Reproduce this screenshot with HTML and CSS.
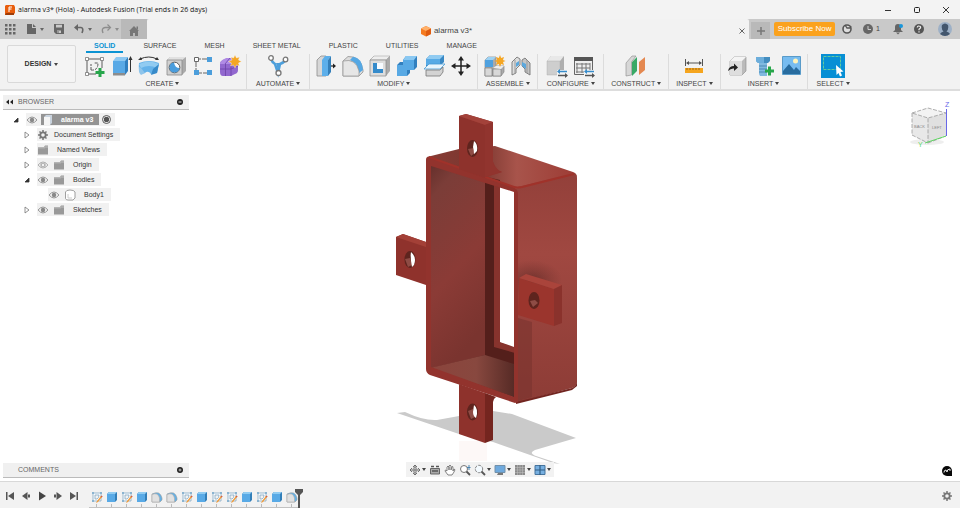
FILE: index.html
```
<!DOCTYPE html>
<html lang="en">
<head>
<meta charset="utf-8">
<meta name="viewport" content="width=device-width, initial-scale=1">
<title>alarma v3* (Hola) - Autodesk Fusion</title>
<link rel="stylesheet" href="styles.css">
</head>
<body>
<svg class="sprite" aria-hidden="true">
  <defs>
    <symbol id="sketch" viewBox="0 0 24 24"><g fill="none" stroke="#5b5b5b"><path d="M4 5H19V14M4 5V20H13"/><path d="M8 16V10M8 16Q15 17 15 9L11 9" stroke-dasharray="3 1"/></g><g fill="#fff" stroke="#666" stroke-width=".7"><path d="M2.500 3.500h3v3h-3zM17.500 3.500h3v3h-3zM2.500 18.500h3v3h-3z"/></g><path d="M17 14v9M12.500 18.500h9" stroke="#27a64b" stroke-width="3"/></symbol>
    <symbol id="extrude" viewBox="0 0 24 24"><path d="M3 7 6 3H18L15 7Z" fill="#8cc8f2"/><path d="M3 7H15V21H3Z" fill="#58a9e6"/><path d="M15 7 18 3V17L15 21Z" fill="#2f7fc0"/><path d="M3 19H15V21.500H3Z" fill="#8c8c8c"/><path d="M20.500 18V5" stroke="#333"/><path d="m18.500 6 2-4 2 4z" fill="#333"/></symbol>
    <symbol id="revolve" viewBox="0 0 24 24"><path d="M2 9Q12 5 22 9L20 19 14 20Q11 16 8 19L4 20Q1 16 2 9Z" fill="#65b2e9"/><path d="M2 10Q12 5 22 10L20 14Q12 10 4 14Z" fill="#91cbf1"/><path d="M16 15 22 10 20 19 14 21Z" fill="#378ac9"/><path d="M4 14 8 19 4 21Q1 18 2 13Z" fill="#8fc5eb"/><path d="M3 5Q12 1 20 5" fill="none" stroke="#333"/><path d="M1 6 4 3 5 6zM22 6 18 6 20 3z" fill="#333"/></symbol>
    <symbol id="hole" viewBox="0 0 24 24"><path d="M3 6 6 3H22V17L18 21H3Z" fill="#aaa"/><path d="M3 6 6 3H22L18 6Z" fill="#e1e1e1"/><path d="M3 6H18V21H3Z" fill="#d0d0d0" stroke="#8a8a8a" stroke-width=".8"/><circle cx="10.500" cy="13.500" r="5.300" fill="#fff" stroke="#555"/><path d="M10 8.500A5 5 0 1 0 15.500 14Q11 14 10 8.500" fill="#4a9ddd"/></symbol>
    <symbol id="pattern" viewBox="0 0 24 24"><path d="M5 5H19M5 8V19H19" fill="none" stroke="#666" stroke-dasharray="5 1"/><path d="M3.500 3.500h4v4h-4z" fill="#fff" stroke="#666"/><path d="M16 3h5v5h-5zM3 16h5v5h-5zM16 16h5v5h-5z" fill="#4c9edb"/></symbol>
    <symbol id="form" viewBox="0 0 24 24"><path d="M2 10Q2 7 5 6L9 4H18Q20 5 20 8V16Q20 19 17 20L13 22H5Q2 22 2 18Z" fill="#9268cf"/><path d="M2 9Q4 5 9 4H18Q20 6 18 8L13 10H2Z" fill="#b08be5"/><path d="M2 15H13L20 12M7.500 10V22M13 10V22M7 10 12 4" fill="none" stroke="#6c42a8" stroke-width=".8"/><path d="m17 1 1.500 3L21.500 3l-1 3 3 1.500-3 1.500 1 3-3-1-1.500 3-1.500-3-3 1 1-3-3-1.500L14 6l-1-3 2.500 1z" fill="#f5a623" stroke="#f7f7f7" stroke-width=".4"/></symbol>
    <symbol id="automate" viewBox="0 0 24 24"><path d="M5 5Q6 8 9 10L12 19L14 10Q17 9 20 6" fill="none" stroke="#4d9fdb" stroke-width="2.500"/><path d="M10 9h4l-1 8h-1z" fill="#4d9fdb"/><g fill="#fff" stroke="#777" stroke-width="1.300"><circle cx="5" cy="4" r="2.300"/><circle cx="19.500" cy="5.500" r="2.300"/><circle cx="12.500" cy="19" r="2.500"/></g></symbol>
    <symbol id="presspull" viewBox="0 0 24 24"><path d="M3 6 7 2H12V22H3Z" fill="#d7d7d7" stroke="#8d8d8d" stroke-width=".8"/><path d="M8 6 11 2H17L14 6V22H8Z" fill="#5dafea"/><path d="m14 6 3-4v16l-3 4z" fill="#347fb9"/><path d="M17 12h4" stroke="#222" stroke-width="1.200"/><path d="m19 9.500 3 2.500-3 2.500z" fill="#222"/></symbol>
    <symbol id="fillet" viewBox="0 0 24 24"><path d="M2 22V7L7 2.500Q20 2 22 16V18L18 22Z" fill="#dcdcdc" stroke="#929292" stroke-width=".8"/><path d="M12 2.800Q21 4 22 16L18 19Q17 9 9 6Z" fill="#55a8e4"/><path d="M2 7Q15 4 18 17V22H2Z" fill="#e6e6e6" stroke="#999" stroke-width=".8"/></symbol>
    <symbol id="shell" viewBox="0 0 24 24"><path d="M2 6 6 2H22V17L18 22H2Z" fill="#aaa"/><path d="M2 6 6 2H22L18 6Z" fill="#eee" stroke="#999" stroke-width=".5"/><path d="M2 6H18V22H2Z" fill="#ddd" stroke="#888" stroke-width=".7"/><path d="M5 9H15V19H5Z" fill="#fff"/><path d="M5 9H9V15H15V19H5Z" fill="#358bcb"/><path d="M9 9H15V15H9Z" fill="#f7fbff"/></symbol>
    <symbol id="combine" viewBox="0 0 24 24"><path d="M8 6 11 2H22V13L19 16H15V19L12 22H2V11L5 8H8Z" fill="#327fbe"/><path d="M8 6 11 2H22L19 6Z" fill="#8ac8f2"/><path d="M8 6H19V16H12V22H2V11H8Z" fill="#58a9e4"/></symbol>
    <symbol id="split" viewBox="0 0 24 24"><path d="M4 5 8 1H22V8L18 12H4Z" fill="#3988c4"/><path d="M4 5 8 1H22L18 5Z" fill="#91cbf1"/><path d="M4 5H18V11H4Z" fill="#58aae5"/><path d="M2 15 7 10H23L18 15Z" fill="#eaf5fc" stroke="#489bd4" stroke-width=".8"/><path d="M4 16H18L21 13V18L18 22H4Z" fill="#d3d3d3" stroke="#777" stroke-width=".8"/></symbol>
    <symbol id="move" viewBox="0 0 24 24"><path d="M12 4V20M4 12H20" stroke="#222" stroke-width="1.500"/><path d="m12 2 3 4.500h-6zM12 22 9 17.500h6zM2 12l4.500-3v6zM22 12l-4.500-3v6z" fill="#222"/></symbol>
    <symbol id="assemble" viewBox="0 0 24 24"><path d="M3 6 6 3H14V12H22V18L19 22H3Z" fill="#aaa" stroke="#888" stroke-width=".7"/><path d="M3 6 6 3H14L11 6Z" fill="#9dd2f4"/><path d="M3 6H11V13H3Z" fill="#4fa1df"/><path d="M3 14H10V22H3zM11 15H19V22H11z" fill="#d8d8d8" stroke="#777" stroke-width=".6"/><path d="m11 14 3-2h8l-3 3z" fill="#eee"/><path d="m18 1 1.200 3L22 3l-1 3 2.500 1L21 8l1 3-2.800-1L18 13l-1.200-3L14 11l1-3-2.500-1L15 6l-1-3 2.800 1z" fill="#f5a623"/></symbol>
    <symbol id="joint" viewBox="0 0 24 24"><path d="M3 8 8 3 11 5V11L7 15V19L3 21Z" fill="#ddd" stroke="#777" stroke-width=".9"/><path d="M21 9 16 4 13 6V12L16 15V18L21 21Z" fill="#c4c4c4" stroke="#777" stroke-width=".9"/><path d="M7 9 10 7V11L7 13zM13 8l4 2v5l-4-3z" fill="#5ba8dd"/><path d="M18 6V19M6 6V20" stroke="#999"/></symbol>
    <symbol id="configure" viewBox="0 0 24 24"><path d="M2 7 6 2H19V17L15 21H2Z" fill="#aeaeae"/><path d="M2 7 6 2H19L15 7Z" fill="#e8e8e8"/><path d="M2 7H15V21H2Z" fill="#cecece" stroke="#aaa" stroke-width=".4"/><use href="#swap"/></symbol>
    <symbol id="swap" viewBox="0 0 24 24"><path d="M12 16H23V23H12z" fill="#f4f4f4"/><path d="M13 17.500H22" stroke="#388dcb" stroke-width="1.500"/><path d="M13 21.500H22" stroke="#555" stroke-width="1.500"/><path d="m12 17.500 3-2.500v5z" fill="#388dcb"/><path d="m23 21.500-3-2.500v5z" fill="#555"/></symbol>
    <symbol id="table" viewBox="0 0 24 24"><path d="M2.500 3.500H20.500V20.500H2.500Z" fill="#eee" stroke="#666"/><path d="M2 3H21V7H2Z" fill="#555"/><path d="M4 10H18M4 14H18M4 18H14M5 9V19M10 9V19M14 9V19M18 9V19" fill="none" stroke="#777"/><use href="#swap"/></symbol>
    <symbol id="construct" viewBox="0 0 24 24"><path d="M8 8 13 3V17L8 22Z" fill="#38a966"/><path d="M2 9 8 2H12L7.500 8V21L2 22Z" fill="#d7d7d7" stroke="#888" stroke-width=".6"/><path d="M15 8 21 3V16L15 21Z" fill="#e48850"/></symbol>
    <symbol id="measure" viewBox="0 0 24 24"><path d="M3 14H21V19H3Z" fill="#f5a51e"/><path d="M5 14v2M8 14v2M11 14v2M14 14v2M17 14v2" stroke="#9d681a"/><path d="M3.500 5V12M20.500 5V12M5 9H19" stroke="#555"/><path d="m4 9 3-2v4zM20 9l-3-2v4z" fill="#555"/></symbol>
    <symbol id="insert" viewBox="0 0 24 24"><path d="M5 7 9 3H21V17L17 21H5Z" fill="#bbb" stroke="#888" stroke-width=".6"/><path d="M5 7H17V21H5Z" fill="#dedede"/><path d="m5 7 4-4h12l-4 4z" fill="#f4f4f4"/><path d="M3 17Q4 12 9 12V9.500L13 13.500 9 17V14.500Q6 14 3 17Z" fill="#222"/></symbol>
    <symbol id="bolt" viewBox="0 0 24 24"><path d="M4 3H18V7L16 9H6L4 7Z" fill="#438dbf"/><path d="M4 3H12V9H6L4 7Z" fill="#6daedb"/><path d="M7 9H15V22H8L7 20Z" fill="#80b9df"/><path d="M7 12H15M7 15H15M7 18H15" stroke="#4a89b5"/><path d="M17.500 12.500v9M13 17h9" stroke="#27a64b" stroke-width="3"/></symbol>
    <symbol id="image" viewBox="0 0 24 24"><path d="M3.500 2.500H21.500V20.500H3.500Z" fill="#77bcf0" stroke="#599bc9"/><circle cx="16.500" cy="7" r="2.500" fill="#fff3ba"/><path d="M4 17 10 10 15 16 17 13 21 17V20H4Z" fill="#286c9f"/></symbol>
    <symbol id="select" viewBox="0 0 24 24"><path d="M0 0H24V24H0Z" fill="#078fd5"/><path d="M2.500 2.500H19.500V15.500H2.500Z" fill="none" stroke="#62cb9c" stroke-dasharray="3 1"/><path d="m15 11 .500 10 2-2 1.500 3.500 2-1-1.500-3.500 3-.500z" fill="#fff"/></symbol>
    <symbol id="eye" viewBox="0 0 12 12"><path d="M1 6Q6 0 11 6Q6 12 1 6Z" fill="#eee" stroke="#999"/><circle cx="6" cy="6" r="2.200" fill="#888"/></symbol>
    <symbol id="eyeoff" viewBox="0 0 12 12"><path d="M1 6Q6 0 11 6Q6 12 1 6ZM4 3.500V8.500M8 3.500V8.500" fill="none" stroke="#b0b0b0"/><circle cx="6" cy="6" r="1.800" fill="none" stroke="#b0b0b0"/></symbol>
    <symbol id="folder" viewBox="0 0 12 12"><path d="M1 3H7L8 1.500H11V10.500H1Z" fill="#999"/><path d="M1 3.800H7.500L8.500 3H11" fill="none" stroke="#ddd" stroke-width=".6"/></symbol>
    <symbol id="gear" viewBox="0 0 12 12"><circle cx="6" cy="6" r="2.700" fill="none" stroke="#777" stroke-width="1.800"/><path d="M6 1v2M6 9v2M1 6h2M9 6h2M2.500 2.500l1.300 1.300M8.200 8.200l1.300 1.300M9.500 2.500 8.200 3.800M3.800 8.200 2.500 9.500" stroke="#777" stroke-width="1.500"/></symbol>
    <symbol id="closed" viewBox="0 0 8 8"><path d="M2 1 6 4 2 7Z" fill="#fff" stroke="#777" stroke-width=".8"/></symbol>
    <symbol id="open" viewBox="0 0 8 8"><path d="M6 2V6H2Z" fill="#333" stroke="#333" stroke-width=".8"/></symbol>
    <symbol id="t-sketch" viewBox="0 0 12 12"><path d="M2 2H10V10H2ZM4 4V8H6Q8 7 8 4Z" fill="#f8fbfd" stroke="#7aa0bd" stroke-width=".7"/><path d="M1 1h2v2H1zM9 1h2v2H9zM1 9h2v2H1z" fill="#8ab4d1"/><path d="m6 10 4-5 1 1-4 5-2 1z" fill="#f29b38"/><path d="m9.500 5.500 1-1 1.200 1-1 1z" fill="#d35f45"/></symbol>
    <symbol id="t-extrude" viewBox="0 0 12 12"><path d="M1 3 3 1H11V9L9 11H1Z" fill="#327fb9"/><path d="M1 3 3 1H11L9 3Z" fill="#91ccf2"/><path d="M1 3H9V11H1Z" fill="#59aae6"/></symbol>
    <symbol id="t-fillet" viewBox="0 0 12 12"><path d="M1 11V3Q9-1 11 7V9L9 11Z" fill="#64b1e6" stroke="#9a9a9a" stroke-width=".6"/><path d="M1 3.500Q7 1 8.500 7V11H1Z" fill="#e1e1e1" stroke="#aaa" stroke-width=".6"/></symbol>
  </defs>
</svg>
<div class="app">
  <header class="titlebar">
    <svg class="ico12" viewBox="0 0 12 12" aria-hidden="true"><path d="M2 1H10L11 3V9L9 11H1V2Z" fill="#e85d0c"/><path d="M2 9H10V11H1z" fill="#9e3c08"/><path d="M5 8V3H8M5 5H7.500" fill="none" stroke="#fff"/></svg>
    <h1>alarma v3* (Hola) - Autodesk Fusion (Trial ends in 26 days)</h1>
    <div class="window-controls">
      <button aria-label="Minimize"><svg class="ico8" viewBox="0 0 8 8"><path d="M1 4.500H7" stroke="#333"/></svg></button>
      <button aria-label="Maximize"><svg class="ico8" viewBox="0 0 8 8"><rect x="1.500" y="1.500" width="5" height="5" rx="1" fill="none" stroke="#222"/></svg></button>
      <button aria-label="Close window"><svg class="ico8" viewBox="0 0 8 8"><path d="m1 1 6 6M7 1 1 7" stroke="#222" stroke-width=".9"/></svg></button>
    </div>
  </header>

  <nav class="docbar" aria-label="Documents">
    <div class="quick">
      <button aria-label="Data panel"><svg class="ico12" viewBox="0 0 12 12"><path d="M1 1h2.500v2.500H1zM5 1h2.500v2.500H5zM9 1h2.500v2.500H9zM1 5h2.500v2.500H1zM5 5h2.500v2.500H5zM9 5h2.500v2.500H9zM1 9h2.500v2.500H1zM5 9h2.500v2.500H5zM9 9h2.500v2.500H9z" fill="#666"/></svg></button>
      <button aria-label="File"><svg class="ico12" viewBox="0 0 12 12"><path d="M2 1H7V5H11V11H2Z" fill="#666"/><path d="m8 1 3 3H8z" fill="#666"/></svg><i class="caret"></i></button>
      <button aria-label="Save"><svg class="ico12" viewBox="0 0 12 12"><path d="M1 1H11V11H3L1 9Z" fill="#666"/><path d="M3 1.800H9V4.500H3ZM4 7.500H8V10H4Z" fill="#c9c9c9"/><path d="M5 8V10" stroke="#666"/></svg></button>
      <button aria-label="Undo"><svg class="ico12" viewBox="0 0 12 12"><path d="M3 4.500H8Q11 5 9 10" fill="none" stroke="#666" stroke-width="1.600"/><path d="M1 4.500 5 1V8Z" fill="#666"/></svg><i class="caret"></i></button>
      <button aria-label="Redo" class="dim"><svg class="ico12" viewBox="0 0 12 12"><path d="M10 4.500H5Q1 5 3 10" fill="none" stroke="#666" stroke-width="1.400"/><path d="M7.500 1.500 10.500 4.500 7.500 7.500" fill="none" stroke="#666" stroke-width="1.200"/></svg><i class="caret"></i></button>
    </div>
    <button class="home" aria-label="Home"><svg class="ico12" viewBox="0 0 12 12"><path d="M6 1 11 6H10V11H7V8H5V11H2V6H1Z" fill="#777"/><path d="M8.500 1.500H10V5L8.500 3.500Z" fill="#777"/></svg></button>
    <div class="doc-tab">
      <span class="doc-name"><svg class="ico12" viewBox="0 0 12 12" aria-hidden="true"><path d="m6 1 5 2.500V9L6 11.500 1 9V3.500Z" fill="#f57b20"/><path d="m6 1 5 2.500L6 6 1 3.500Z" fill="#ffb06a"/><path d="M6 6 11 3.500V9L6 11.500Z" fill="#df5b10"/></svg>alarma v3*</span>
      <button aria-label="Close document"><svg class="ico8" viewBox="0 0 8 8"><path d="m1.500 1.500 5 5M6.500 1.500 1.500 6.500" stroke="#666"/></svg></button>
    </div>
    <button class="new-tab" aria-label="New document"><svg class="ico12" viewBox="0 0 12 12"><path d="M6 2V10M2 6H10" stroke="#777" stroke-width="1.500"/></svg></button>
    <button class="subscribe">Subscribe Now</button>
    <div class="account">
      <button aria-label="Extensions"><svg class="ico12" viewBox="0 0 12 12"><circle cx="6" cy="6" r="4" fill="#ddd" stroke="#555" stroke-width="1.600"/><path d="m4 2 2 3h3l1-2" fill="none" stroke="#555" stroke-width="1.300"/></svg></button>
      <button aria-label="Job status"><svg class="ico12" viewBox="0 0 12 12"><circle cx="6" cy="6" r="5" fill="#666"/><path d="M6 3V6.500H9" fill="none" stroke="#ccc"/></svg><span>1</span></button>
      <button aria-label="Notifications"><svg class="ico12" viewBox="0 0 12 12"><path d="M1 9 3 7V4Q3 1 6 1T9 4V7L11 9ZM4 9.500H8L6 11.500Z" fill="#666"/><circle cx="9" cy="3" r="2" fill="#1897dc"/></svg></button>
      <button aria-label="Help"><svg class="ico12" viewBox="0 0 12 12"><circle cx="6" cy="6" r="5" fill="#555"/><path d="M4.200 4.500Q4.500 2.800 6 3Q8 3.200 7.500 5L6 6.300V7.300M6 8.300V9.500" fill="none" stroke="#eee" stroke-width="1.200"/></svg></button>
      <button aria-label="Profile"><svg class="ico14" viewBox="0 0 14 14"><circle cx="7" cy="7" r="7" fill="#9db0c6"/><path d="M2 12Q3 10 5.500 9.500Q3 7 4 3Q7 0 10 3Q11 7 8.500 9.500Q11 10 12 12Q7 16 2 12" fill="#43566d"/></svg></button>
    </div>
  </nav>

  <section class="ribbon" aria-label="Ribbon">
    <button class="workspace">DESIGN<i class="caret"></i></button>
    <div class="ribbon-main">
      <div class="tabs">
        <button class="tab active">SOLID</button><button class="tab">SURFACE</button><button class="tab">MESH</button><button class="tab">SHEET METAL</button><button class="tab">PLASTIC</button><button class="tab">UTILITIES</button><button class="tab">MANAGE</button>
      </div>
      <div class="groups">
        <div class="group first"><div class="tools"><button aria-label="Create sketch"><svg><use href="#sketch"/></svg></button><button aria-label="Extrude"><svg><use href="#extrude"/></svg></button><button aria-label="Revolve"><svg><use href="#revolve"/></svg></button><button aria-label="Hole"><svg><use href="#hole"/></svg></button><button aria-label="Pattern"><svg><use href="#pattern"/></svg></button><button aria-label="Create form"><svg><use href="#form"/></svg></button></div><button class="menu">CREATE<i class="caret"></i></button></div>
        <div class="group wide"><div class="tools"><button aria-label="Automated modeling"><svg><use href="#automate"/></svg></button></div><button class="menu">AUTOMATE<i class="caret"></i></button></div>
        <div class="group"><div class="tools"><button aria-label="Press pull"><svg><use href="#presspull"/></svg></button><button aria-label="Fillet"><svg><use href="#fillet"/></svg></button><button aria-label="Shell"><svg><use href="#shell"/></svg></button><button aria-label="Combine"><svg><use href="#combine"/></svg></button><button aria-label="Split body"><svg><use href="#split"/></svg></button><button aria-label="Move"><svg><use href="#move"/></svg></button></div><button class="menu">MODIFY<i class="caret"></i></button></div>
        <div class="group"><div class="tools"><button aria-label="New component"><svg><use href="#assemble"/></svg></button><button aria-label="Joint"><svg><use href="#joint"/></svg></button></div><button class="menu">ASSEMBLE<i class="caret"></i></button></div>
        <div class="group mid"><div class="tools"><button aria-label="Configure model"><svg><use href="#configure"/></svg></button><button aria-label="Configuration table"><svg><use href="#table"/></svg></button></div><button class="menu">CONFIGURE<i class="caret"></i></button></div>
        <div class="group mid"><div class="tools"><button aria-label="Offset plane"><svg><use href="#construct"/></svg></button></div><button class="menu">CONSTRUCT<i class="caret"></i></button></div>
        <div class="group mid"><div class="tools"><button aria-label="Measure"><svg><use href="#measure"/></svg></button></div><button class="menu">INSPECT<i class="caret"></i></button></div>
        <div class="group"><div class="tools"><button aria-label="Insert derive"><svg><use href="#insert"/></svg></button><button aria-label="Insert fastener"><svg><use href="#bolt"/></svg></button><button aria-label="Insert image"><svg><use href="#image"/></svg></button></div><button class="menu">INSERT<i class="caret"></i></button></div>
        <div class="group wide last"><div class="tools"><button aria-label="Select tool"><svg><use href="#select"/></svg></button></div><button class="menu">SELECT<i class="caret"></i></button></div>
      </div>
    </div>
  </section>

  <main class="canvas">
    <svg class="scene" viewBox="0 91 960 390" role="img" aria-label="Red enclosure model">
      <defs>
        <linearGradient id="wall" x1="0" y1="0" x2=".3" y2="1"><stop offset="0" stop-color="#66302c"/><stop offset=".15" stop-color="#7b3d38"/><stop offset=".6" stop-color="#8b3b36"/><stop offset="1" stop-color="#7a342f"/></linearGradient>
        <linearGradient id="side" x1="0" y1="0" x2="0" y2="1"><stop offset="0" stop-color="#93403a"/><stop offset=".35" stop-color="#a04841"/><stop offset="1" stop-color="#8d3c36"/></linearGradient>
        <linearGradient id="top" x1="0" y1="0" x2="1" y2="0"><stop offset="0" stop-color="#883c35"/><stop offset=".35" stop-color="#79362f"/><stop offset=".6" stop-color="#a8544b"/><stop offset="1" stop-color="#9d3c35"/></linearGradient>
        <linearGradient id="floor" x1="0" y1="0" x2="1" y2="0"><stop offset="0" stop-color="#8b443c"/><stop offset=".55" stop-color="#88483f"/><stop offset="1" stop-color="#572b26"/></linearGradient>
        <radialGradient id="shade"><stop offset="0" stop-color="#431e1b" stop-opacity=".5"/><stop offset="1" stop-color="#5e2825" stop-opacity="0"/></radialGradient>
        <clipPath id="sideclip"><path d="M518 187 577 174V384L571 389 517 402Z"/></clipPath>
      </defs>
      <path d="M397 413 405 412Q424 421 437 420L459 416 493 411 512 414 576 438 535 450Q528 453 536 456L560 464 553 463 493 442 459 434Z" fill="#cacaca"/>
      <path d="M459 441H487V461H459Z" fill="#fdf8f7"/>
      <path d="M427 157 459 149 495 146 573 172Q578 174 576 178L517 190Z" fill="url(#top)"/>
      <path d="M518 187 573 173Q577 173 577 178V382Q577 386 572 388L516 403 514 190Z" fill="url(#side)"/>
      <g clip-path="url(#sideclip)"><ellipse cx="532" cy="280" rx="30" ry="20" fill="url(#shade)"/><path d="M518 318 532 322V397L518 401Z" fill="#79332e" opacity=".6"/></g>
      <path d="M516 402 572 388Q577 386 577 381V386L572 390 516 404Z" fill="#722520"/>
      <path d="M430 164 500 180V342L516 347V398L430 370Z" fill="#5b231f"/>
      <path d="M431 165 485 182V355L431 368Z" fill="url(#wall)"/>
      <path d="M485 182 494 185V347L515 352V365L485 356Z" fill="#541f1b"/>
      <path d="M494 185 500 187V342L515 346V353L494 347Z" fill="#87332d"/>
      <path d="M500 187 514 192V347L500 342Z" fill="#fff"/>
      <path d="M430 368 485 355 514 364V397Z" fill="url(#floor)"/>
      <path fill-rule="evenodd" d="M426 160Q426 156 430 157L513 187Q518 189 518 194V402L515 403 430 375Q426 373 426 369ZM431 166V367L514 397V192Z" fill="#92332d"/>
      <path d="M429 157 514 187Q517 188 522 187L574 174" fill="none" stroke="#a0322a" stroke-width="2"/>
      <path d="M459 116 466 114 493 122V162Q496 170 502 172L486 177 459 168Z" fill="#93332d"/>
      <path d="M459 116 485 125V178L459 169Z" fill="#8e322c"/><path d="M459 116 466 114 493 122 485 125Z" fill="#a3423a"/><path d="M485 125 493 122V162Q496 170 502 172L485 177Z" fill="#91342e"/>
      <path d="M396 237 403 234 426 242V285L396 275Z" fill="#8f322c"/><path d="M396 237 403 234 426 242V247Z" fill="#a34037"/>
      <path d="M519 278 554 289V326L518 315Z" fill="#9b352d"/><path d="M519 278 526 274 562 285 554 289Z" fill="#aa443b"/><path d="M554 289 562 285V323L554 326Z" fill="#8a322c"/>
      <path d="M459 384 485 393V443L459 434Z" fill="#8e322c"/><path d="M485 393 496 397Q493 399 493 402V440L485 443Z" fill="#74251f"/>
      <g fill="#5e241e"><ellipse cx="472.500" cy="148.500" rx="5.500" ry="8.500"/><ellipse cx="410" cy="259.500" rx="5.500" ry="8.500"/><ellipse cx="534" cy="300.500" rx="5.500" ry="8.500"/><ellipse cx="472.500" cy="412" rx="5.500" ry="8.500"/></g>
      <g fill="#8e4c45"><path d="M468 149 474 148 476 152 471 156Z"/><path d="M405 259 410 258 412 265 408 267Z"/><path d="M530 301 535 300 538 303 533 307Z"/><path d="M468 411 473 409 475 417 471 419Z"/></g>
      <g fill="#fff"><path d="M474 141Q478 144 477 151L474 154Q474 150 473 147Z"/><path d="M411 252Q417 257 414 265L412 267Q410 257 411 252Z"/><path d="M474 405Q479 409 476 418Q473 416 473 412Z"/></g>
    </svg>
    <div class="side-panels">
      <section class="browser" aria-label="Browser">
        <div class="panel-head"><button aria-label="Collapse browser"><svg class="ico8" viewBox="0 0 8 8"><path d="M4 1.500V6.500L1 4ZM8 1.500V6.500L5 4Z" fill="#222"/></svg></button><h2>BROWSER</h2><button aria-label="Browser options"><svg class="ico8" viewBox="0 0 8 8"><circle cx="4" cy="4" r="3" fill="#222"/><path d="M2.500 4h3" stroke="#ddd"/></svg></button></div>
        <ul class="tree">
          <li class="root"><svg class="ico8"><use href="#open"/></svg><span class="node"><svg class="ico12"><use href="#eye"/></svg><span class="chosen"><svg class="ico12" viewBox="0 0 12 12"><path d="M2 3 4 1H10V9L8 11H2Z" fill="#c9d3de"/><path d="M2 3H8V11H2Z" fill="#f5f5f5"/></svg><b>alarma v3</b></span><input type="radio" checked aria-label="Activate alarma v3"></span></li>
          <li><svg class="ico8"><use href="#closed"/></svg><span class="node"><svg class="ico12"><use href="#gear"/></svg><span class="name near-name">Document Settings</span></span></li>
          <li><svg class="ico8"><use href="#closed"/></svg><span class="node"><svg class="ico12"><use href="#folder"/></svg><span class="name">Named Views</span></span></li>
          <li><svg class="ico8"><use href="#closed"/></svg><span class="node"><svg class="ico12"><use href="#eyeoff"/></svg><svg class="ico12"><use href="#folder"/></svg><span class="name">Origin</span></span></li>
          <li><svg class="ico8"><use href="#open"/></svg><span class="node"><svg class="ico12"><use href="#eye"/></svg><svg class="ico12"><use href="#folder"/></svg><span class="name">Bodies</span></span></li>
          <li class="child"><span class="node"><svg class="ico12"><use href="#eye"/></svg><svg class="ico12" viewBox="0 0 12 12"><path d="M1.500 3V9.500Q2 11 4 11H9L11 9V3Q10 1 6 1T1.500 3Z" fill="#fff" stroke="#888" stroke-width=".8"/><path d="M4 5V9H8" stroke="#ccc" fill="none"/></svg><span class="name">Body1</span></span></li>
          <li><svg class="ico8"><use href="#closed"/></svg><span class="node"><svg class="ico12"><use href="#eye"/></svg><svg class="ico12"><use href="#folder"/></svg><span class="name">Sketches</span></span></li>
        </ul>
      </section>
      <section class="panel-head comments"><h2>COMMENTS</h2><button aria-label="Add comment"><svg class="ico8" viewBox="0 0 8 8"><circle cx="4" cy="4" r="3" fill="#222"/><path d="M2.500 4h3M4 2.500v3" stroke="#ddd" stroke-width=".8"/></svg></button></section>
    </div>
    <div class="navbar" role="toolbar" aria-label="Navigation">
      <button aria-label="Orbit"><svg class="ico12" viewBox="0 0 12 12"><path d="M6 1V11M1 6H11M4 3 6 1 8 3M4 9 6 11 8 9M3 4 1 6 3 8M9 4 11 6 9 8" fill="none" stroke="#666" stroke-width=".9"/><ellipse cx="6" cy="6" rx="2" ry="3" fill="none" stroke="#777" stroke-width=".7"/></svg><i class="caret"></i></button>
      <button aria-label="Look at"><svg class="ico12" viewBox="0 0 12 12"><path d="M1.500 4.500H10.500V10H1.500Z" fill="#aaa" stroke="#666"/><path d="M2 2.500H5M7 2.500H10M3 7H9" stroke="#555" stroke-width="1.500"/></svg></button>
      <button aria-label="Pan"><svg class="ico12" viewBox="0 0 12 12"><path d="M4 11 1 7Q1 5 3 7L3 3Q4 1 5 3V6V2Q6 0 7 2V6L8 2.500Q9 2 9 4V7L10 5Q12 5 10 8L8 11Z" fill="#fff" stroke="#666" stroke-width=".8"/></svg></button>
      <button aria-label="Zoom"><svg class="ico12" viewBox="0 0 12 12"><circle cx="5" cy="5" r="3.500" fill="#fff" stroke="#777"/><path d="m7.500 7.500 3.500 3.500" stroke="#555" stroke-width="1.800"/><path d="M10 1V6M8 3.500H11.500" stroke="#4b83ae"/></svg></button>
      <button aria-label="Fit"><svg class="ico12" viewBox="0 0 12 12"><circle cx="5" cy="5" r="3.700" fill="#f3faff" stroke="#888" stroke-dasharray="3 1"/><path d="m7.500 7.500 3.500 3.500" stroke="#555" stroke-width="1.800"/></svg><i class="caret"></i></button>
      <button aria-label="Display settings"><svg class="ico12" viewBox="0 0 12 12"><path d="M1 1.500H11V8.500H1Z" fill="#6ea9dd" stroke="#7190aa"/><path d="M4 9H9V11H3Z" fill="#777"/></svg><i class="caret"></i></button>
      <button aria-label="Grid and snaps"><svg class="ico12" viewBox="0 0 12 12"><path d="M1 1H11V11H1Z" fill="#8b8b8b"/><path d="M1 3.500H11M1 6H11M1 8.500H11M3.500 1V11M6 1V11M8.500 1V11" stroke="#c2c2c2" stroke-width=".5"/></svg><i class="caret"></i></button>
      <button aria-label="Viewports"><svg class="ico12" viewBox="0 0 12 12"><path d="M1 1.500H11V10.500H1Z" fill="#77afe0" stroke="#47759e"/><path d="M1 6H11M6 1V11" stroke="#315f86" stroke-width="1.200"/></svg><i class="caret"></i></button>
    </div>
    <div class="corner">
      <svg class="viewcube" viewBox="908 98 48 52" role="img" aria-label="View cube">
        <ellipse cx="927" cy="142" rx="17" ry="3" fill="#ddd" opacity=".5"/>
        <path d="M912 113 928 108 946 113 928 118Z" fill="#f3f3f3"/><path d="M912 113 928 118V143L912 135Z" fill="#e8e8e8"/><path d="M928 118 946 113V135L928 143Z" fill="#e0e0e0"/>
        <path d="M912 113 928 108 946 113 928 118ZM912 113V135L928 143V118M928 143 946 136" fill="none" stroke="#999" stroke-width=".8" stroke-dasharray="4 1.500"/>
        <path d="M946.500 109V136" stroke="#6868e8"/><path d="M946 136 925 143" stroke="#62d766"/>
        <text x="914" y="128" class="face">BACK</text><text x="932" y="129" class="face">LEFT</text><text x="945" y="107" class="axis z">Z</text><text x="918" y="147" class="axis y">Y</text>
      </svg>
      <button aria-label="Assistant"><svg class="ico12" viewBox="0 0 12 12"><path d="M6 1A5 5 0 1 0 6 11H11V6A5 5 0 0 0 6 1" fill="#080808"/><path d="M3 7.500Q3 5 5 5L6 7Q6 4 9 4V6" fill="none" stroke="#fff" stroke-width=".9"/></svg></button>
    </div>
  </main>

  <footer class="timeline">
    <div class="playback">
      <button aria-label="Go to start"><svg class="ico10" viewBox="0 0 10 10"><path d="M1 1H2.500V9H1ZM9 1V9L3 5Z" fill="#555"/></svg></button>
      <button aria-label="Step back"><svg class="ico10" viewBox="0 0 10 10"><path d="M6.500 1V9L1 5ZM7 3.500H9V6.500H7Z" fill="#555"/></svg></button>
      <button aria-label="Play"><svg class="ico10" viewBox="0 0 10 10"><path d="M2 .500 9 5 2 9.500Z" fill="#444"/></svg></button>
      <button aria-label="Step forward"><svg class="ico10" viewBox="0 0 10 10"><path d="M3.500 1V9L9 5ZM1 3.500H3V6.500H1Z" fill="#555"/></svg></button>
      <button aria-label="Go to end"><svg class="ico10" viewBox="0 0 10 10"><path d="M7.500 1H9V9H7.500ZM1 1V9L7 5Z" fill="#555"/></svg></button>
    </div>
    <div class="features">
      <button aria-label="Sketch 1"><svg class="ico12"><use href="#t-sketch"/></svg></button><button aria-label="Extrude 1"><svg class="ico12"><use href="#t-extrude"/></svg></button><button aria-label="Sketch 2"><svg class="ico12"><use href="#t-sketch"/></svg></button><button aria-label="Extrude 2"><svg class="ico12"><use href="#t-extrude"/></svg></button><button aria-label="Fillet 1"><svg class="ico12"><use href="#t-fillet"/></svg></button><button aria-label="Fillet 2"><svg class="ico12"><use href="#t-fillet"/></svg></button><button aria-label="Sketch 3"><svg class="ico12"><use href="#t-sketch"/></svg></button><button aria-label="Extrude 3"><svg class="ico12"><use href="#t-extrude"/></svg></button><button aria-label="Sketch 4"><svg class="ico12"><use href="#t-sketch"/></svg></button><button aria-label="Sketch 5"><svg class="ico12"><use href="#t-sketch"/></svg></button><button aria-label="Extrude 4"><svg class="ico12"><use href="#t-extrude"/></svg></button><button aria-label="Sketch 6"><svg class="ico12"><use href="#t-sketch"/></svg></button><button aria-label="Extrude 5"><svg class="ico12"><use href="#t-extrude"/></svg></button><button aria-label="Fillet 3"><svg class="ico12"><use href="#t-fillet"/></svg></button>
    </div>
    <svg class="marker" viewBox="0 0 8 20" aria-hidden="true"><path d="M0 0H8V3L5 6V20H3V6L0 3Z" fill="#555"/></svg>
    <button class="settings" aria-label="Timeline settings"><svg class="ico12"><use href="#gear"/></svg></button>
  </footer>
</div>
</body>
</html>
```

FILE: styles.css
```
* { box-sizing: border-box; }
body { margin: 0; background: #f2f2f2; color: #444; font: 7px/10px "Liberation Sans", Arial, sans-serif; }
button { display: flex; align-items: center; justify-content: center; margin: 0; padding: 0; border: 0; background: none; color: inherit; font: inherit; white-space: nowrap; }
h1, h2, ul { margin: 0; padding: 0; font: inherit; list-style: none; }
svg { display: block; flex: none; }
.sprite { position: absolute; width: 0; height: 0; }
.ico8 { width: 8px; height: 8px; }
.ico10 { width: 10px; height: 10px; }
.ico12 { width: 12px; height: 12px; }
.ico14 { width: 14px; height: 14px; }
.caret { width: 0; height: 0; margin-left: 2px; border: 2px solid transparent; border-top: 3px solid #444; border-bottom: 0; }

.app { display: flex; flex-direction: column; min-height: 100vh; }

.titlebar { display: flex; align-items: center; gap: 2px; height: 19px; padding: 0 0 0 4px; background: #f3f3f3; color: #222; }
.titlebar h1 { flex: 1; font: 7px/12px "Open Sans", sans-serif; color: #111; }
.window-controls { display: flex; }
.window-controls button { width: 29px; height: 19px; }

.docbar { display: flex; align-items: stretch; height: 20px; background: #c9c9c9; }
.quick { display: flex; align-items: center; gap: 9px; width: 121px; padding-left: 4px; }
.quick .caret { margin-left: 3px; border-top-color: #666; }
.quick button:nth-child(n+4) { margin-left: -1px; }
.dim { opacity: .6; }
.home { width: 26px; padding-top: 3px; background: #b9b9b9; }
.doc-tab { display: flex; flex: 1; align-items: center; padding: 3px 3px 0 7px; background: #f2f2f2; border-radius: 2px 2px 0 0; }
.doc-name { display: flex; flex: 1; align-items: center; justify-content: center; gap: 2px; font-size: 8px; }
.new-tab { width: 19px; margin: 3px 4px 0 2px; background: #b9b9b9; }
.subscribe { width: 61px; margin: 3px 0; border-radius: 2px; background: #fba21d; color: #fff; font-size: 8px; }
.account { display: flex; align-items: center; gap: 9px; padding: 0 8px 0 6px; }
.account span { margin-left: 2px; }
.account button:nth-child(3) { margin-left: 3px; }
.account button:last-child { margin-left: 4px; }

.ribbon { display: flex; gap: 7px; height: 52px; padding-left: 7px; border-bottom: 2px solid #ddd; background: #f2f2f2; }
.workspace { width: 69px; margin: 6px 0; border: 1px solid #d9d9d9; border-radius: 2px; background: #f4f4f4; color: #333; font-weight: bold; }
.workspace .caret { margin-left: 3px; }
.ribbon-main { flex: 1; }
.tabs { display: flex; gap: 12px; height: 15px; padding-left: 3px; }
.tab { height: 14px; padding: 2px 8px 0; border-bottom: 2px solid transparent; }
.tab.active { border-color: #0b93d3; color: #0b93d3; font-weight: bold; }
.groups { display: flex; }
.group { display: flex; flex-direction: column; align-items: center; height: 35px; padding: 0 4px; border-right: 1px solid #dcdcdc; }
.group.first { padding-left: 0; }
.group.mid { padding: 0 7px; }
.group.wide { padding: 0 9px; }
.group.last { border: 0; }
.tools { display: flex; gap: 3px; }
.tools svg { width: 24px; height: 24px; }
.menu { height: 11px; }

.canvas { display: grid; flex: 1; grid-template: "stage" 1fr / 1fr; min-height: 389px; background: #fff; }
.canvas > * { grid-area: stage; }
.scene { width: 100%; height: 100%; }
.side-panels { display: flex; flex-direction: column; justify-content: space-between; justify-self: start; width: 190px; padding: 4px 1px 3px 3px; }
.panel-head { display: flex; align-items: center; height: 15px; padding: 0 5px 0 2px; border-bottom: 1px solid #bbb; background: #f0f0f0; color: #666; }
.panel-head h2 { flex: 1; padding-left: 5px; }
.comments h2 { padding-left: 13px; }
.tree { padding: 2px 0 0 20px; }
.tree li { display: flex; align-items: center; gap: 6px; height: 15px; color: #333; }
.tree .root { margin-left: -11px; }
.tree .child { padding-left: 25px; }
.node { display: flex; align-items: center; gap: 4px; height: 13px; padding: 0 7px 0 0; background: #f1f1f1; }
.root .node { gap: 3px; padding-right: 4px; }
.name { padding-left: 4px; }
.near-name { padding-left: 1px; }
.chosen { display: flex; align-items: center; gap: 7px; height: 11px; padding: 0 6px 0 1px; background: #949494; color: #fff; }
.root input { width: 9px; height: 9px; margin: 0; accent-color: #555; }
.navbar { display: flex; align-items: center; align-self: end; justify-self: center; gap: 3px; height: 15px; margin-bottom: 4px; padding: 0 3px; background: #f2f2f2; }
.navbar .caret { margin-left: 1px; }
.corner { display: flex; flex-direction: column; align-items: flex-end; justify-content: space-between; justify-self: end; padding: 7px 4px 4px 0; }
.corner button { margin-right: 3px; }
.viewcube { width: 48px; height: 52px; }
.face { fill: #888; font-size: 4px; }
.axis { font-size: 7px; }
.z { fill: #6868e8; }
.y { fill: #62d766; }

.timeline { display: flex; align-items: center; height: 28px; padding: 0 7px 0 5px; border-top: 1px solid #d8d8d8; background: #f2f2f2; }
.playback { display: flex; gap: 6px; width: 84px; }
.features { display: flex; align-self: end; height: 20px; margin-bottom: 1px; border-bottom: 1px solid #c2c2c2; background: repeating-linear-gradient(90deg, transparent 0 7px, #bbb 7px 8px, transparent 8px 15px) 0 100% / 100% 3px no-repeat; }
.features button { width: 15px; height: 17px; }
.marker { align-self: end; width: 8px; height: 20px; margin-left: -4px; }
.settings { margin-left: auto; }
```
